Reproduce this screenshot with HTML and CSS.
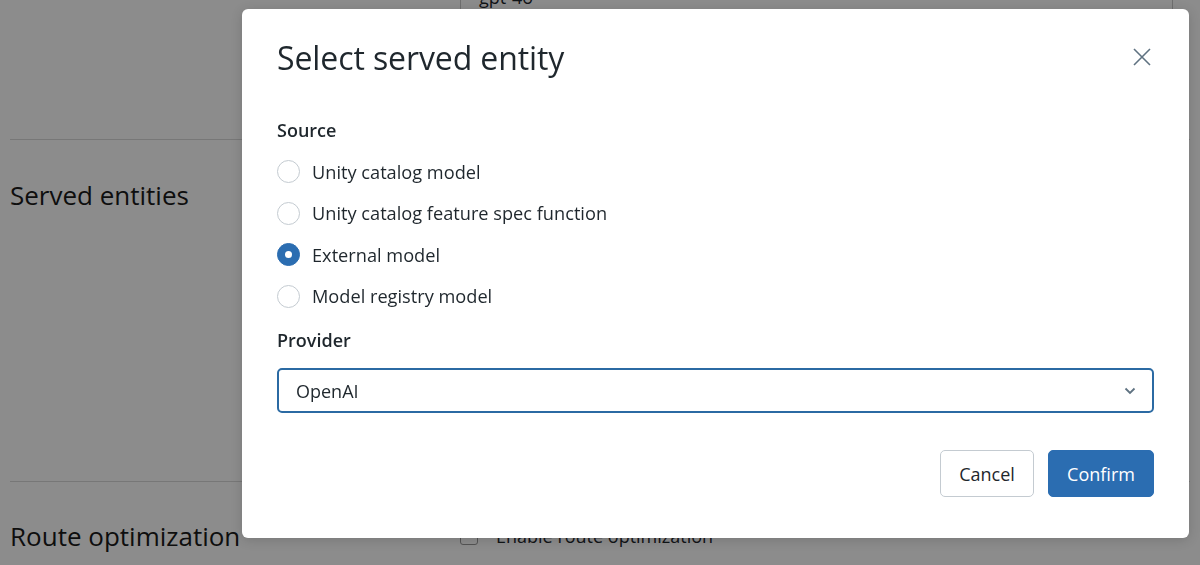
FILE: index.html
```html
<!DOCTYPE html>
<html lang="en">

<head>
    <meta charset="UTF-8">
    <meta name="viewport" content="width=device-width, initial-scale=1.0">
    <title>Select served entity</title>
    <link rel="stylesheet" href="styles.css">
</head>

<body>

    <!-- Page behind the dialog -->
    <div class="page">
        <div class="row row-top">
            <div class="row-label"></div>
            <div class="row-field">
                <div class="bg-input">gpt-4o</div>
            </div>
        </div>

        <div class="row row-entities">
            <div class="row-label">Served entities</div>
            <div class="row-field"></div>
        </div>

        <div class="row row-route">
            <div class="row-label">Route optimization</div>
            <div class="row-field">
                <label class="bg-check"><span class="bg-box"></span>Enable route optimization</label>
            </div>
        </div>
    </div>

    <div class="overlay"></div>

    <!-- Dialog -->
    <div class="modal">
        <div class="modal-header">
            <h1>Select served entity</h1>
            <button class="close-btn" aria-label="Close">
                <svg width="20" height="20" viewBox="0 0 20 20">
                    <path d="M2 2 L18 18 M18 2 L2 18" stroke="#5f7281" stroke-width="1.6" fill="none" />
                </svg>
            </button>
        </div>

        <div class="field-label">Source</div>
        <div class="radio-group">
            <label class="radio"><span class="dot"></span>Unity catalog model</label>
            <label class="radio"><span class="dot"></span>Unity catalog feature spec function</label>
            <label class="radio checked"><span class="dot"></span>External model</label>
            <label class="radio"><span class="dot"></span>Model registry model</label>
        </div>

        <div class="field-label">Provider</div>
        <div class="select">
            <span>OpenAI</span>
            <svg width="12" height="8" viewBox="0 0 12 8">
                <path d="M1.5 1.5 L6 6 L10.5 1.5" stroke="#5f7281" stroke-width="1.8" fill="none" />
            </svg>
        </div>

        <div class="modal-footer">
            <button class="btn btn-default">Cancel</button>
            <button class="btn btn-primary">Confirm</button>
        </div>
    </div>

</body>

</html>
```

FILE: styles.css
```css
/* Basic Reset */
* {
    margin: 0;
    padding: 0;
    box-sizing: border-box;
}

body {
    width: 1200px;
    height: 565px;
    overflow: hidden;
    background-color: #fff;
    font-family: "Open Sans", "Noto Sans", sans-serif;
    color: #1f272d;
}

/* Background page */
.page {
    padding: 0 10px;
}

.row {
    display: flex;
    border-bottom: 1px solid #d9d9d9;
}

.row-label {
    width: 450px;
    font-size: 26px;
    color: #1a1a1a;
}

.row-field {
    flex: 1;
    padding-right: 17px;
}

.row-top {
    height: 140px;
}

.bg-input {
    margin-top: -26px;
    height: 40px;
    border: 1px solid #c8c8c8;
    border-radius: 4px;
    padding: 10px 18px;
    font-size: 18px;
}

.row-entities {
    height: 342px;
}

.row-entities .row-label {
    padding-top: 37px;
}

.row-route {
    border-bottom: none;
}

.row-route .row-label {
    padding-top: 36px;
}

.bg-check {
    display: flex;
    align-items: center;
    gap: 18px;
    padding-top: 42px;
    font-size: 18px;
}

.bg-box {
    width: 18px;
    height: 18px;
    border: 1px solid #999;
    border-radius: 3px;
}

.overlay {
    position: fixed;
    inset: 0;
    background: rgba(0, 0, 0, 0.45);
}

/* Dialog */
.modal {
    position: absolute;
    left: 242px;
    top: 9px;
    width: 947px;
    height: 529px;
    background-color: #fff;
    border-radius: 6px;
    padding: 29px 35px 0 35px;
    box-shadow: 0 2px 12px rgba(0, 0, 0, 0.15);
}

.modal-header {
    display: flex;
    justify-content: space-between;
    align-items: center;
    height: 38px;
    margin-bottom: 41px;
}

.modal-header h1 {
    font-size: 32px;
    font-weight: 500;
    color: #1f272d;
    letter-spacing: -0.1px;
}

.close-btn {
    background: none;
    border: none;
    width: 20px;
    height: 20px;
    margin-right: 2px;
    margin-top: 0;
}

.field-label {
    font-size: 18px;
    font-weight: 600;
    height: 26px;
    line-height: 26px;
    margin-bottom: 8px;
}

.radio-group {
    display: flex;
    flex-direction: column;
    margin-bottom: 10px;
}

.radio {
    display: flex;
    align-items: center;
    gap: 12px;
    height: 41.5px;
    font-size: 18.2px;
}

.dot {
    width: 23px;
    height: 23px;
    border: 1px solid #c4cbd1;
    border-radius: 50%;
    display: flex;
    align-items: center;
    justify-content: center;
}

.radio.checked .dot {
    background-color: #2b6db1;
    border-color: #2b6db1;
}

.radio.checked .dot::after {
    content: "";
    width: 7px;
    height: 7px;
    border-radius: 50%;
    background-color: #fff;
}

.select {
    margin-top: 15px;
    height: 45px;
    border: 2px solid #2b6aa3;
    border-radius: 5px;
    display: flex;
    align-items: center;
    justify-content: space-between;
    padding: 0 16px 0 17px;
    font-size: 18px;
}

.modal-footer {
    display: flex;
    justify-content: flex-end;
    gap: 14px;
    margin-top: 37px;
}

.btn {
    height: 47px;
    border-radius: 5px;
    font-family: inherit;
    font-size: 18px;
    padding: 0 16px;
}

.btn-default {
    width: 94px;
    background-color: #fff;
    border: 1px solid #c4cbd1;
    color: #1f272d;
}

.btn-primary {
    width: 106px;
    background-color: #2b6db1;
    border: 1px solid #2b6db1;
    color: #fff;
}
```
